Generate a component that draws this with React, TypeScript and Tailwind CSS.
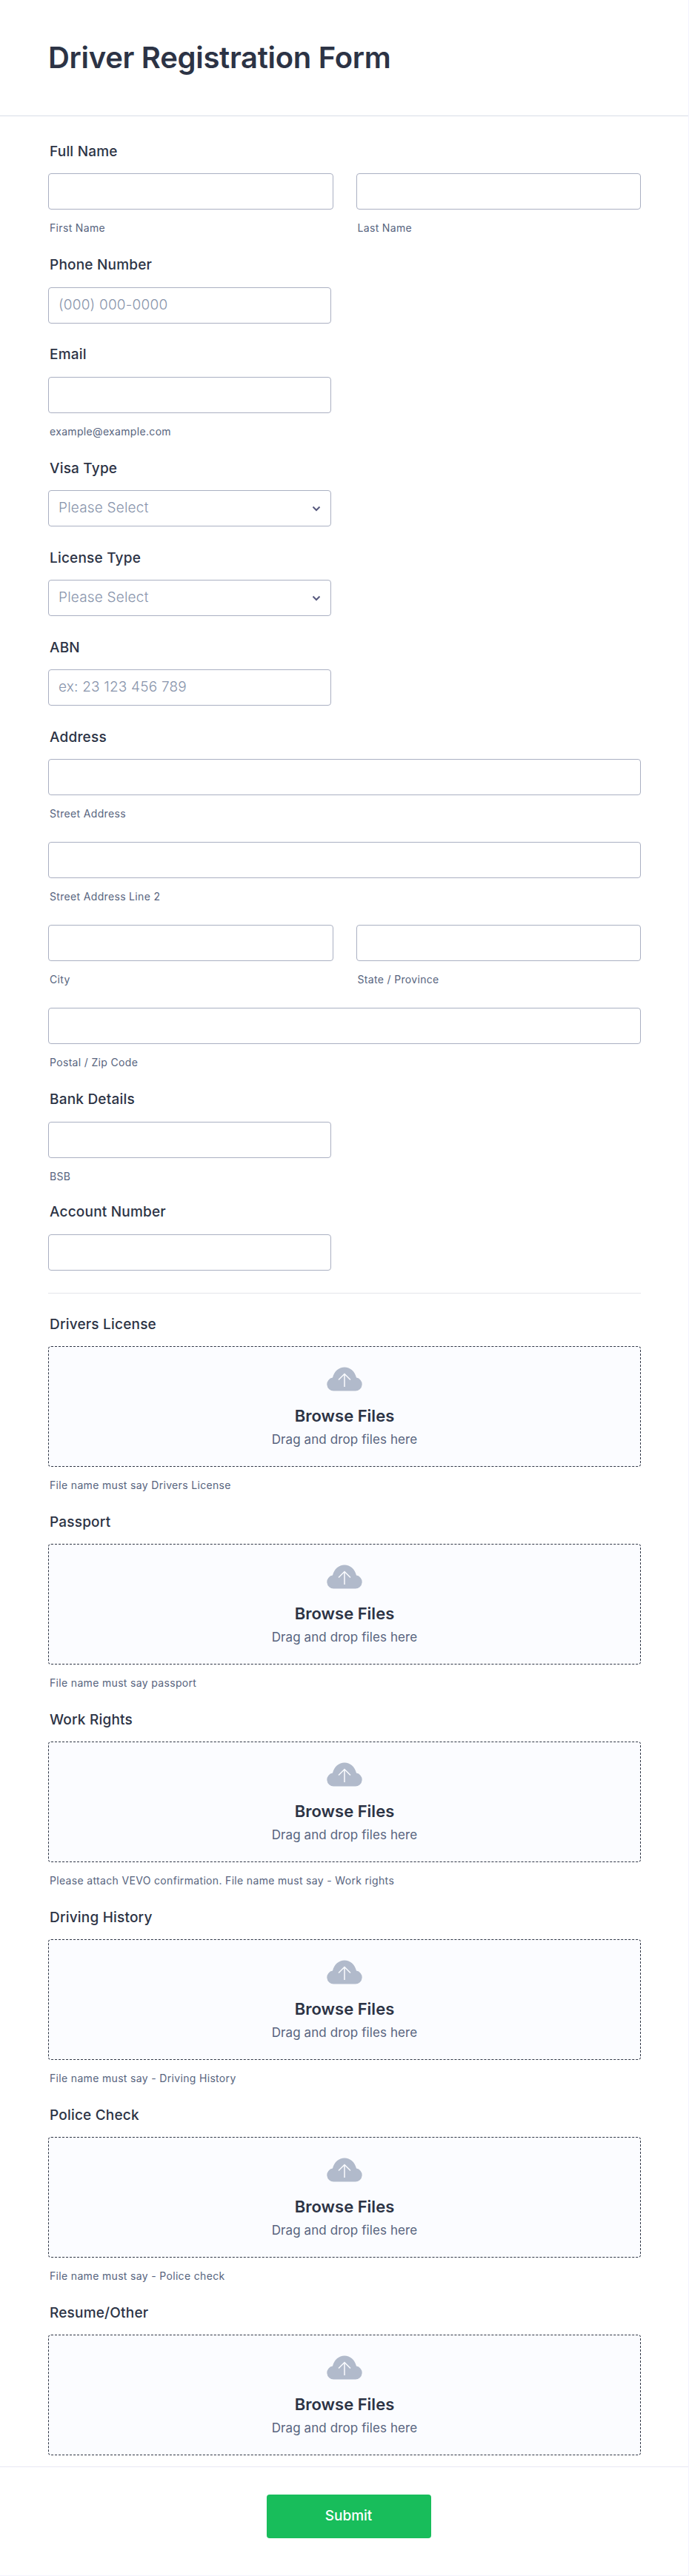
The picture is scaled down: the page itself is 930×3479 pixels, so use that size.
const sans = "font-['Inter','Noto_Sans',sans-serif]";

const Label = ({ children, upload }: { children: string; upload?: boolean }) => (
  <label className={`block h-6 pl-0.5 text-[19px]/6 font-medium tracking-[0.2px] text-[#2c3345] ${upload ? "mb-[17px]" : "mb-[17.5px]"}`}>{children}</label>
);

const Sub = ({ children }: { children: string }) => (
  <div className="mt-4 h-[16.5px] pl-0.5 text-sm/[17px] tracking-[0.33px] text-[#57647e]">{children}</div>
);

const Input = ({ placeholder, className = "w-full" }: { placeholder?: string; className?: string }) => (
  <div className={`flex h-[49px] items-center rounded border border-[#aab0c2] bg-white pl-[13px] text-[19px] font-light tracking-[0.2px] text-[#8894ab] ${className}`}>
    {placeholder}
  </div>
);

const Field = ({ label, placeholder, sub, className = "mb-[30.5px]" }: { label: string; placeholder?: string; sub?: string; className?: string }) => (
  <div className={className}>
    <Label>{label}</Label>
    <Input placeholder={placeholder} className="w-[382px]" />
    {sub && <Sub>{sub}</Sub>}
  </div>
);

const SelectField = ({ label }: { label: string }) => (
  <div className="mb-[30.5px]">
    <Label>{label}</Label>
    <div className="flex h-[49px] w-[382px] items-center justify-between rounded border border-[#aab0c2] bg-white pl-[13px] pr-[13px] text-[19px] font-light tracking-[0.2px] text-[#8894ab]">
      Please Select
      <svg width="12" height="8" viewBox="0 0 12 8" fill="none" stroke="#57597e" strokeWidth="2">
        <path d="M1.5 1.5 6 6l4.500-4.500" />
      </svg>
    </div>
  </div>
);

const TwoCol = ({ left, right }: { left: string; right: string }) => (
  <div className="mb-[30.5px] grid grid-cols-2 gap-[31px]">
    <div>
      <Input />
      <Sub>{left}</Sub>
    </div>
    <div>
      <Input />
      <Sub>{right}</Sub>
    </div>
  </div>
);

const Upload = ({ label, note }: { label: string; note?: string }) => (
  <div className="mb-[30.5px]">
    <Label upload>{label}</Label>
    <div className="flex h-[163px] flex-col items-center rounded border border-dashed border-[#2f3645] bg-[#fbfcff] pt-[27px]">
      <svg width="48" height="33" viewBox="0 0 48 33">
        <path
          d="M9.500 32.500a9 9 0 0 1-1.500-17.900C10 6 16.500.5 24 .5s14 5.500 16 14.100a9 9 0 0 1-1.500 17.900z"
          fill="#b1bacb"
        />
        <path d="M24 27V9.500M16 17.500l8-8 8 8" fill="none" stroke="#fbfcff" strokeWidth="1.500" />
      </svg>
      <div className="mt-[17px] text-[22px]/8 font-semibold text-[#2c3345]">Browse Files</div>
      <div className="text-[17px]/8 tracking-[0.1px] text-[#57647e]">Drag and drop files here</div>
    </div>
    {note && <Sub>{note}</Sub>}
  </div>
);

export default function App() {
  return (
    <div className={`${sans} min-h-[3479px] border-r border-b border-[#f3f3fe] bg-white`}>
      <header className="flex h-[157px] items-center border-b border-[#d8dde6] pl-[65px]">
        <h1 className="text-[40px]/[48px] font-semibold tracking-[-0.3px] text-[#2c3345]">Driver Registration Form</h1>
      </header>

      <main className="pl-[65px] pr-[64px] pt-[35.5px]">
        <div>
          <Label>Full Name</Label>
          <TwoCol left="First Name" right="Last Name" />
        </div>
        <Field label="Phone Number" placeholder="(000) 000-0000" />
        <Field label="Email" sub="example@example.com" />
        <SelectField label="Visa Type" />
        <SelectField label="License Type" />
        <Field label="ABN" placeholder="ex: 23 123 456 789" />
        <div>
          <Label>Address</Label>
          <div className="mb-[30.5px]">
            <Input />
            <Sub>Street Address</Sub>
          </div>
          <div className="mb-[30.5px]">
            <Input />
            <Sub>Street Address Line 2</Sub>
          </div>
          <TwoCol left="City" right="State / Province" />
          <div className="mb-[30.5px]">
            <Input />
            <Sub>Postal / Zip Code</Sub>
          </div>
        </div>
        <Field label="Bank Details" sub="BSB" className="mb-[29px]" />
        <Field label="Account Number" className="mb-[30px]" />
        <div className="mb-[30px] border-t border-[#e3e5ea]" />
        <Upload label="Drivers License" note="File name must say Drivers License" />
        <Upload label="Passport" note="File name must say passport" />
        <Upload label="Work Rights" note="Please attach VEVO confirmation. File name must say - Work rights" />
        <Upload label="Driving History" note="File name must say - Driving History" />
        <Upload label="Police Check" note="File name must say - Police check" />
        <Upload label="Resume/Other" />
      </main>

      <footer className="-mt-[15px] flex justify-center border-t border-[#e8e8f4] pt-[37px]">
        <button className="ml-[12px] h-[59px] w-[222px] rounded bg-[#18bd5b] text-[19px] font-medium text-white">Submit</button>
      </footer>
    </div>
  );
}
